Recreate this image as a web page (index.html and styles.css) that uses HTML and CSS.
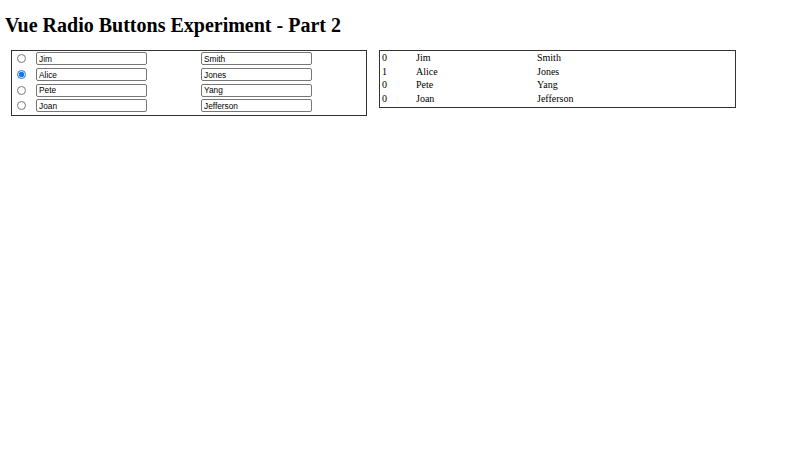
FILE: index.html
```html
<!DOCTYPE html>
<html>
<head>
<meta charset="utf-8">
<link rel="stylesheet" href="styles.css">
</head>
<body>
<h1 class="title">Vue Radio Buttons Experiment - Part 2</h1>
<div class="panels">
  <div class="editor">
    <div class="row">
      <input class="pick" type="radio" name="sel">
      <input class="field first" type="text" value="Jim">
      <input class="field last" type="text" value="Smith">
    </div>
    <div class="row">
      <input class="pick" type="radio" name="sel" checked>
      <input class="field first" type="text" value="Alice">
      <input class="field last" type="text" value="Jones">
    </div>
    <div class="row">
      <input class="pick" type="radio" name="sel">
      <input class="field first" type="text" value="Pete">
      <input class="field last" type="text" value="Yang">
    </div>
    <div class="row">
      <input class="pick" type="radio" name="sel">
      <input class="field first" type="text" value="Joan">
      <input class="field last" type="text" value="Jefferson">
    </div>
  </div>
  <div class="readout">
    <div class="rrow"><span class="c0">0</span><span class="c1">Jim</span><span class="c2">Smith</span></div>
    <div class="rrow"><span class="c0">1</span><span class="c1">Alice</span><span class="c2">Jones</span></div>
    <div class="rrow"><span class="c0">0</span><span class="c1">Pete</span><span class="c2">Yang</span></div>
    <div class="rrow"><span class="c0">0</span><span class="c1">Joan</span><span class="c2">Jefferson</span></div>
  </div>
</div>
</body>
</html>
```

FILE: styles.css
```css
html, body {
  margin: 0;
  padding: 0;
  background: #fff;
}
body {
  font-family: "Liberation Serif", serif;
  color: #000;
  padding: 0 5px;
}
.title {
  font-family: "Liberation Serif", serif;
  font-weight: bold;
  font-size: 20px;
  line-height: 22px;
  margin: 0;
  padding-top: 14px;
}
.panels {
  display: flex;
  align-items: flex-start;
  gap: 12px;
  margin-top: 14px;
  padding-left: 6px;
}
.editor {
  width: 354px;
  border: 1px solid #333;
  padding: 0 0 1px 0;
}
.row {
  display: flex;
  align-items: center;
  height: 15.7px;
}
.pick {
  width: 9px;
  height: 9px;
  margin: 0 0 0 4.5px;
  accent-color: #1a73e8;
}
.field {
  box-sizing: border-box;
  width: 111px;
  height: 13px;
  margin: 0;
  padding: 0 2px;
  border: 1px solid #767676;
  border-radius: 2px;
  font-family: "Liberation Sans", Arial, sans-serif;
  font-size: 8.3px;
  color: #000;
  background: #fff;
}
.first {
  margin-left: 10.5px;
}
.last {
  margin-left: 54px;
}
.readout {
  width: 355px;
  border: 1px solid #333;
  padding: 0 0 2px 0;
  font-size: 10px;
}
.rrow {
  display: flex;
  height: 13.6px;
  line-height: 13.6px;
}
.c0 {
  width: 34px;
  padding-left: 2px;
}
.c1 {
  width: 121px;
}
```
